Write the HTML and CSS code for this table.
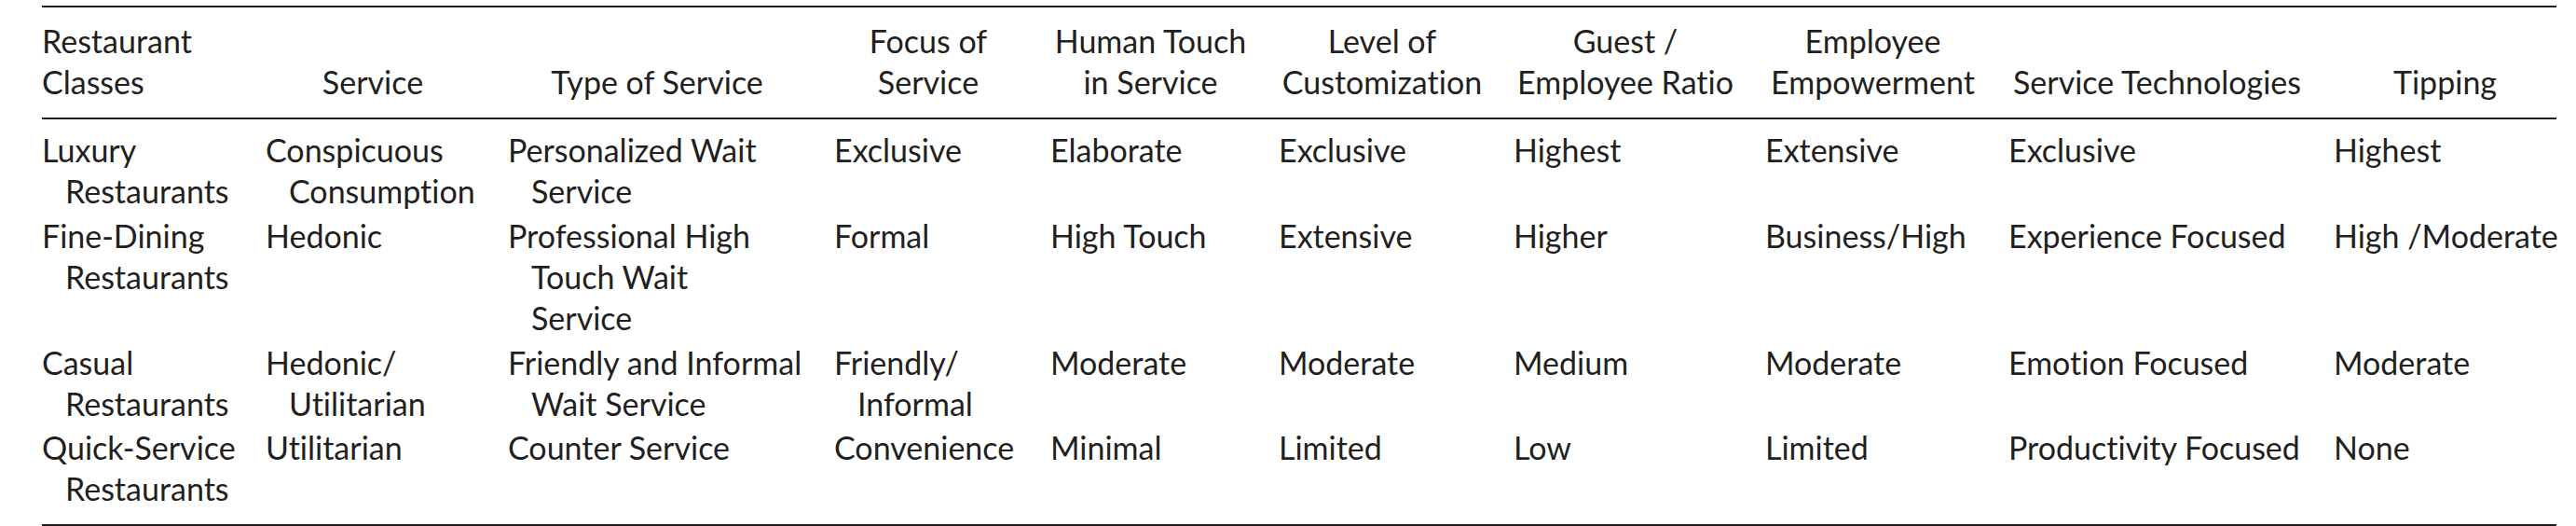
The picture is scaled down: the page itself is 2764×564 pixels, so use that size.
FILE: index.html
```html
<!DOCTYPE html>
<html lang="en">
<head>
<meta charset="utf-8">
<title>Restaurant Classes</title>
<link rel="stylesheet" href="styles.css">
</head>
<body>
<table class="tbl">
  <colgroup>
    <col class="c1"><col class="c2"><col class="c3"><col class="c4"><col class="c5">
    <col class="c6"><col class="c7"><col class="c8"><col class="c9"><col class="c10">
  </colgroup>
  <thead>
    <tr>
      <th class="first">Restaurant<br>Classes</th>
      <th>Service</th>
      <th>Type of Service</th>
      <th>Focus of<br>Service</th>
      <th>Human Touch<br>in Service</th>
      <th>Level of<br>Customization</th>
      <th>Guest /<br>Employee Ratio</th>
      <th>Employee<br>Empowerment</th>
      <th>Service Technologies</th>
      <th class="last">Tipping</th>
    </tr>
  </thead>
  <tbody>
    <tr class="r1">
      <td>Luxury<br>Restaurants</td>
      <td>Conspicuous<br>Consumption</td>
      <td>Personalized Wait<br>Service</td>
      <td>Exclusive</td>
      <td>Elaborate</td>
      <td>Exclusive</td>
      <td>Highest</td>
      <td>Extensive</td>
      <td>Exclusive</td>
      <td class="last">Highest</td>
    </tr>
    <tr>
      <td>Fine-Dining<br>Restaurants</td>
      <td>Hedonic</td>
      <td>Professional High<br>Touch Wait<br>Service</td>
      <td>Formal</td>
      <td>High Touch</td>
      <td>Extensive</td>
      <td>Higher</td>
      <td>Business/High</td>
      <td>Experience Focused</td>
      <td class="last">High /Moderate</td>
    </tr>
    <tr>
      <td>Casual<br>Restaurants</td>
      <td>Hedonic/<br>Utilitarian</td>
      <td>Friendly and Informal<br>Wait Service</td>
      <td>Friendly/<br>Informal</td>
      <td>Moderate</td>
      <td>Moderate</td>
      <td>Medium</td>
      <td>Moderate</td>
      <td>Emotion Focused</td>
      <td class="last">Moderate</td>
    </tr>
    <tr class="r4">
      <td>Quick-Service<br>Restaurants</td>
      <td>Utilitarian</td>
      <td>Counter Service</td>
      <td>Convenience</td>
      <td>Minimal</td>
      <td>Limited</td>
      <td>Low</td>
      <td>Limited</td>
      <td>Productivity Focused</td>
      <td class="last">None</td>
    </tr>
  </tbody>
</table>
</body>
</html>
```

FILE: styles.css
```css
html, body {
  margin: 0;
  padding: 0;
  background: #ffffff;
}

body {
  padding: 6px 0 0 45px;
}

.tbl {
  border-collapse: collapse;
  table-layout: fixed;
  width: 2698px;
  font-family: "Lato", "Liberation Sans", sans-serif;
  font-size: 34px;
  line-height: 44px;
  font-variant-ligatures: none;
  font-feature-settings: "liga" 0, "clig" 0;
  color: #231f20;
  border-top: 2px solid #231f20;
  border-bottom: 2px solid #231f20;
}

.c1 { width: 240px; }
.c2 { width: 260px; }
.c3 { width: 350px; }
.c4 { width: 232px; }
.c5 { width: 245px; }
.c6 { width: 252px; }
.c7 { width: 270px; }
.c8 { width: 261px; }
.c9 { width: 349px; }
.c10 { width: 239px; }

.tbl th,
.tbl td {
  white-space: nowrap;
  padding: 0 30px 0 0;
}

.tbl th.last,
.tbl td.last {
  padding-right: 0;
}

.tbl thead th {
  font-weight: normal;
  text-align: center;
  vertical-align: bottom;
  padding-top: 14px;
  padding-bottom: 16px;
  border-bottom: 2px solid #231f20;
}

.tbl thead th.first {
  text-align: left;
}

.tbl tbody td {
  text-align: left;
  vertical-align: top;
  padding-top: 4px;
  padding-left: 25px;
  text-indent: -25px;
}

.tbl tbody tr.r1 td {
  padding-top: 11px;
}

.tbl tbody tr.r4 td {
  padding-top: 3px;
  padding-bottom: 16px;
}
```
